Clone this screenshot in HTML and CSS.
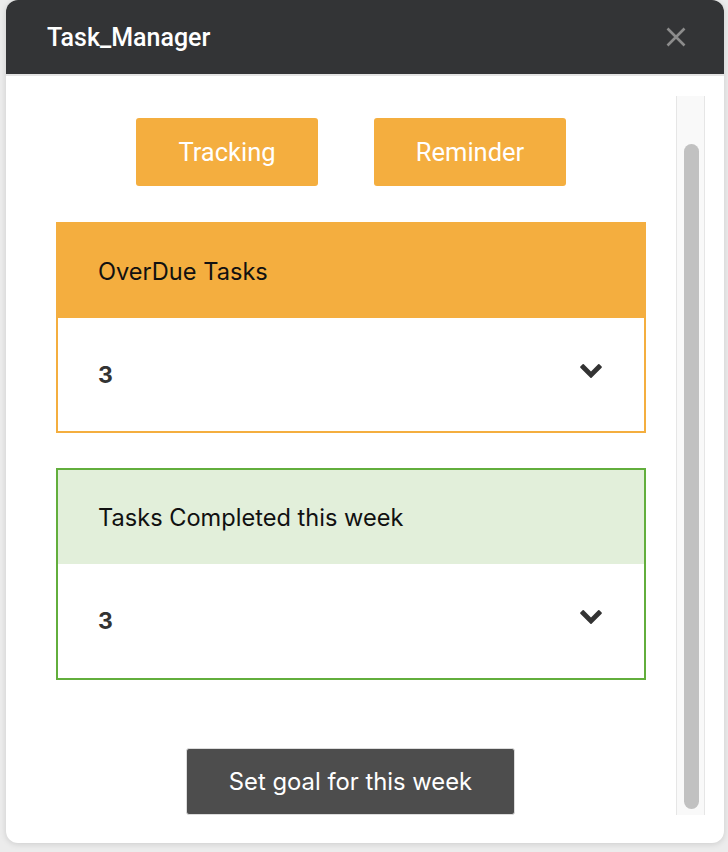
FILE: index.html
```html
<!DOCTYPE html>
<html lang="en">
<head>
<meta charset="utf-8">
<title>Task_Manager</title>
<link rel="stylesheet" href="styles.css">
</head>
<body>
<div class="window">
  <header class="header">
    <h1 class="title">Task_Manager</h1>
    <button class="close" aria-label="Close">
      <svg width="20" height="20" viewBox="0 0 20 20"><path d="M1.5 1.5L18.5 18.5M18.5 1.5L1.5 18.5" stroke="#8c8c8c" stroke-width="2.6" fill="none"/></svg>
    </button>
  </header>
  <main class="main">
    <div class="content">
      <div class="tabs">
        <button class="tab tab-tracking">Tracking</button>
        <button class="tab tab-reminder">Reminder</button>
      </div>
      <section class="card card-overdue">
        <div class="card-head">OverDue Tasks</div>
        <div class="card-body">
          <span class="count">3</span>
          <svg class="chev" width="22" height="14" viewBox="90 533 1612 1035"><path fill="#333" d="M1683 808l-742 741q-19 19-45 19t-45-19l-742-741q-19-19-19-45.5t19-45.5l166-165q19-19 45-19t45 19l531 531 531-531q19-19 45-19t45 19l166 165q19 19 19 45.5t-19 45.5z"/></svg>
        </div>
      </section>
      <section class="card card-done">
        <div class="card-head">Tasks Completed this week</div>
        <div class="card-body">
          <span class="count">3</span>
          <svg class="chev" width="22" height="14" viewBox="90 533 1612 1035"><path fill="#333" d="M1683 808l-742 741q-19 19-45 19t-45-19l-742-741q-19-19-19-45.5t19-45.5l166-165q19-19 45-19t45 19l531 531 531-531q19-19 45-19t45 19l166 165q19 19 19 45.5t-19 45.5z"/></svg>
        </div>
      </section>
      <div class="goal-row">
        <button class="goal">Set goal for this week</button>
      </div>
    </div>
    <div class="scrollbar"><div class="thumb"></div></div>
  </main>
</div>
</body>
</html>
```

FILE: styles.css
```css
* { box-sizing: border-box; }
html, body { margin: 0; padding: 0; }
body {
  background: #ececec;
  width: 728px;
  height: 852px;
  overflow: hidden;
}
.window {
  margin-left: 6px;
  width: 718px;
  height: 843px;
  background: #fff;
  border-radius: 12px;
  box-shadow: 0 1px 6px rgba(0,0,0,0.14);
  overflow: hidden;
  display: flex;
  flex-direction: column;
}
.header {
  height: 76px;
  flex: none;
  background: #333436;
  border-bottom: 2px solid #e4e4e4;
  display: flex;
  align-items: center;
  justify-content: space-between;
  padding: 0 38px 0 41px;
}
.title {
  margin: 0;
  font-family: Roboto, "Liberation Sans", sans-serif;
  font-weight: 500;
  font-size: 25px;
  color: #fff;
  letter-spacing: 0;
}
.close {
  border: 0;
  background: transparent;
  padding: 0;
  width: 20px;
  height: 20px;
  display: flex;
}
.main {
  flex: none;
  display: flex;
  height: 719px;
  margin-top: 20px;
}
.content {
  width: 670px;
  padding: 22px 30px 0 50px;
  display: flex;
  flex-direction: column;
}
.tabs {
  display: flex;
  justify-content: center;
  gap: 56px;
  height: 68px;
}
.tab {
  border: 0;
  border-radius: 3px;
  background: #f4ae3f;
  color: #fff;
  font-family: Roboto, "Liberation Sans", sans-serif;
  font-size: 25.5px;
  font-weight: 400;
  height: 68px;
  padding: 0;
}
.tab-tracking { width: 182px; }
.tab-reminder { width: 192px; }
.card {
  border: 2px solid;
  width: 590px;
  display: flex;
  flex-direction: column;
  font-family: Inter, "Noto Sans", sans-serif;
}
.card-overdue { border-color: #f4ae3f; margin-top: 36px; height: 211px; }
.card-done { border-color: #62ae3c; margin-top: 35px; height: 212px; }
.card-head {
  height: 94px;
  flex: none;
  display: flex;
  align-items: center;
  padding-left: 40px;
  font-size: 23.6px;
  color: #111;
}
.card-overdue .card-head { background: #f4ae3f; }
.card-done .card-head { background: #e2efda; }
.card-body {
  flex: 1;
  display: flex;
  align-items: center;
  justify-content: space-between;
  padding: 0 42px 0 40px;
}
.count {
  font-size: 23px;
  font-weight: 700;
  color: #333;
}
.chev { margin-bottom: 8px; }
.goal-row {
  display: flex;
  justify-content: center;
  margin-top: 68px;
  padding-right: 1px;
}
.goal {
  width: 329px;
  height: 67px;
  background: #4d4d4d;
  border: 1px solid #dcdcdc;
  border-radius: 3px;
  color: #fff;
  font-family: Inter, "Noto Sans", sans-serif;
  font-size: 23.8px;
  padding: 0;
}
.scrollbar {
  width: 29px;
  height: 719px;
  background: #f9f9f9;
  border-left: 1px solid #e6e6e6;
  border-right: 1px solid #e6e6e6;
  padding: 48px 5px 6px 7px;
  display: flex;
}
.thumb {
  flex: 1;
  background: #c1c1c1;
  border-radius: 8px;
}
```
